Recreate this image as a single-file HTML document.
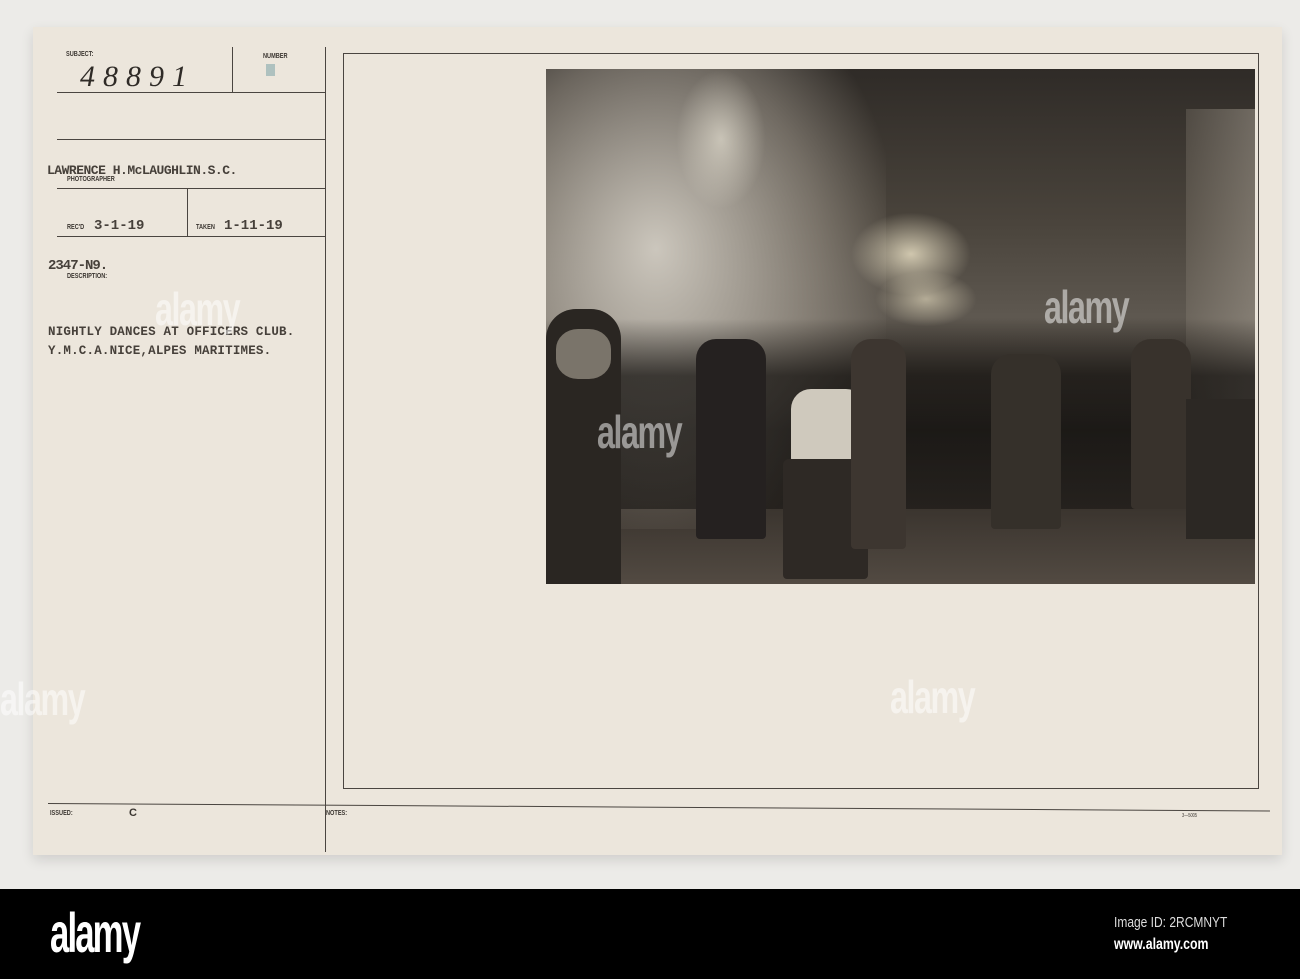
<!DOCTYPE html>
<html><head><meta charset="utf-8"><style>
body{margin:0;width:1300px;height:979px;background:#ecebe8;position:relative;overflow:hidden;font-family:"Liberation Mono",monospace;}
.card{position:absolute;left:33px;top:27px;width:1249px;height:828px;background:#ece6dc;box-shadow:0 5px 12px rgba(0,0,0,.12);}
.l{position:absolute;background:#4a4540;}
.t{position:absolute;color:#3b3631;white-space:nowrap;}
.m{font-weight:bold;color:#46403a;}
.s{font-family:"Liberation Sans",sans-serif;font-weight:bold;font-size:7px;transform:scaleX(.8);transform-origin:left;}
.photo{position:absolute;left:546px;top:69px;width:709px;height:515px;overflow:hidden;background:#3c362f;}
.photo div{position:absolute;}
.bar{position:absolute;left:0;top:889px;width:1300px;height:90px;background:#000;}
.wm{position:absolute;color:rgba(255,255,255,.5);font-family:"Liberation Sans",sans-serif;font-weight:bold;letter-spacing:-2px;transform:scaleX(.7);transform-origin:left;}
</style></head><body>
<div class="card"></div>
<div class="l" style="left:57px;top:92px;width:268px;height:1px"></div>
<div class="l" style="left:232px;top:47px;width:1px;height:45px"></div>
<div class="l" style="left:57px;top:139px;width:268px;height:1px"></div>
<div class="l" style="left:57px;top:188px;width:268px;height:1px"></div>
<div class="l" style="left:187px;top:188px;width:1px;height:48px"></div>
<div class="l" style="left:57px;top:236px;width:268px;height:1px"></div>
<div class="l" style="left:325px;top:47px;width:1px;height:805px"></div>
<div class="l" style="left:48px;top:803px;width:1222px;height:1px;transform:rotate(.35deg);transform-origin:left"></div>
<div style="position:absolute;left:343px;top:53px;width:914px;height:734px;border:1px solid #4a4540;"></div>
<div class="t s" style="left:66px;top:51px">SUBJECT:</div>
<div class="t s" style="left:263px;top:53px">NUMBER</div>
<div class="t" style="left:266px;top:64px;width:9px;height:12px;background:#9fb8b8;opacity:.8"></div>
<div class="t" style="left:80px;top:60px;font-family:'Liberation Serif',serif;font-style:italic;font-size:30px;letter-spacing:8px;color:#2f2b27">48891</div>
<div class="t m" style="left:47px;top:163px;font-size:13px;letter-spacing:-.5px">LAWRENCE H.McLAUGHLIN.S.C.</div>
<div class="t s" style="left:67px;top:176px">PHOTOGRAPHER</div>
<div class="t s" style="left:67px;top:224px">REC'D</div>
<div class="t m" style="left:94px;top:218px;font-size:14px">3-1-19</div>
<div class="t s" style="left:196px;top:224px">TAKEN</div>
<div class="t m" style="left:224px;top:218px;font-size:14px">1-11-19</div>
<div class="t m" style="left:48px;top:258px;font-size:14px;letter-spacing:-1px">2347-N9.</div>
<div class="t s" style="left:67px;top:273px">DESCRIPTION:</div>
<div class="t m" style="left:48px;top:325px;font-size:12.5px;letter-spacing:.2px">NIGHTLY DANCES AT OFFICERS CLUB.</div>
<div class="t m" style="left:48px;top:344px;font-size:12.5px;letter-spacing:.2px">Y.M.C.A.NICE,ALPES MARITIMES.</div>
<div class="t s" style="left:50px;top:810px">ISSUED:</div>
<div class="t" style="left:129px;top:807px;font-family:'Liberation Sans',sans-serif;font-weight:bold;font-size:11px">C</div>
<div class="t s" style="left:326px;top:810px">NOTES:</div>
<div class="t s" style="left:1182px;top:813px;font-weight:normal;font-size:5px">3—5005</div>
<div class="photo">
<div style="inset:0;background:linear-gradient(180deg,#2f2b27 0%,#4a443c 30%,#5e5850 48%,#4a433b 60%,#2a2622 70%,#3a342e 85%,#524a42 100%)"></div>
<div style="left:-120px;top:-100px;width:460px;height:560px;background:radial-gradient(ellipse at center,rgba(225,220,210,.85),rgba(180,172,160,.45) 50%,rgba(120,112,100,0) 75%)"></div>
<div style="left:130px;top:0;width:90px;height:140px;background:radial-gradient(ellipse,rgba(240,235,220,.6),rgba(0,0,0,0) 70%)"></div>
<div style="left:300px;top:140px;width:130px;height:90px;background:radial-gradient(ellipse,rgba(250,240,210,.75),rgba(200,190,170,0) 65%)"></div>
<div style="left:325px;top:200px;width:110px;height:60px;background:radial-gradient(ellipse,rgba(240,230,200,.6),rgba(200,190,170,0) 65%)"></div>
<div style="left:640px;top:40px;width:69px;height:320px;background:linear-gradient(90deg,rgba(140,132,120,.3),rgba(170,162,150,.5))"></div>
<div style="left:0;top:250px;width:709px;height:190px;background:linear-gradient(180deg,rgba(20,18,16,0),rgba(20,18,16,.7) 30%,rgba(20,18,16,.55))"></div>
<div style="left:0;top:240px;width:75px;height:275px;background:#2a2622;border-radius:30px 30px 0 0"></div>
<div style="left:10px;top:260px;width:55px;height:50px;background:#7a746a;border-radius:40%"></div>
<div style="left:245px;top:320px;width:75px;height:75px;background:#cfc9bd;border-radius:20px 20px 6px 6px"></div>
<div style="left:237px;top:390px;width:85px;height:120px;background:#2e2925;border-radius:6px 6px 4px 4px"></div>
<div style="left:305px;top:270px;width:55px;height:210px;background:#3d3630;border-radius:20px 20px 4px 4px"></div>
<div style="left:150px;top:270px;width:70px;height:200px;background:#252120;border-radius:20px 20px 4px 4px"></div>
<div style="left:445px;top:285px;width:70px;height:175px;background:#35302a;border-radius:20px 20px 4px 4px"></div>
<div style="left:585px;top:270px;width:60px;height:170px;background:#38322c;border-radius:20px 20px 4px 4px"></div>
<div style="left:640px;top:330px;width:69px;height:140px;background:#2c2824"></div>
</div>
<div class="wm" style="left:155px;top:282px;font-size:46px">alamy</div>
<div class="wm" style="left:597px;top:405px;font-size:46px">alamy</div>
<div class="wm" style="left:1044px;top:280px;font-size:46px">alamy</div>
<div class="wm" style="left:0;top:672px;font-size:46px">alamy</div>
<div class="wm" style="left:890px;top:670px;font-size:46px">alamy</div>
<div class="bar"></div>
<div style="position:absolute;left:50px;top:900px;color:#fff;font-family:'Liberation Sans',sans-serif;font-weight:bold;font-size:56px;letter-spacing:-3px;transform:scaleX(.62);transform-origin:left">alamy</div>
<div style="position:absolute;left:1114px;top:914px;color:#ddd;font-family:'Liberation Sans',sans-serif;font-size:15px;transform:scaleX(.8);transform-origin:left">Image ID: 2RCMNYT</div>
<div style="position:absolute;left:1114px;top:936px;color:#fff;font-family:'Liberation Sans',sans-serif;font-weight:bold;font-size:16px;transform:scaleX(.77);transform-origin:left">www.alamy.com</div>
</body></html>
